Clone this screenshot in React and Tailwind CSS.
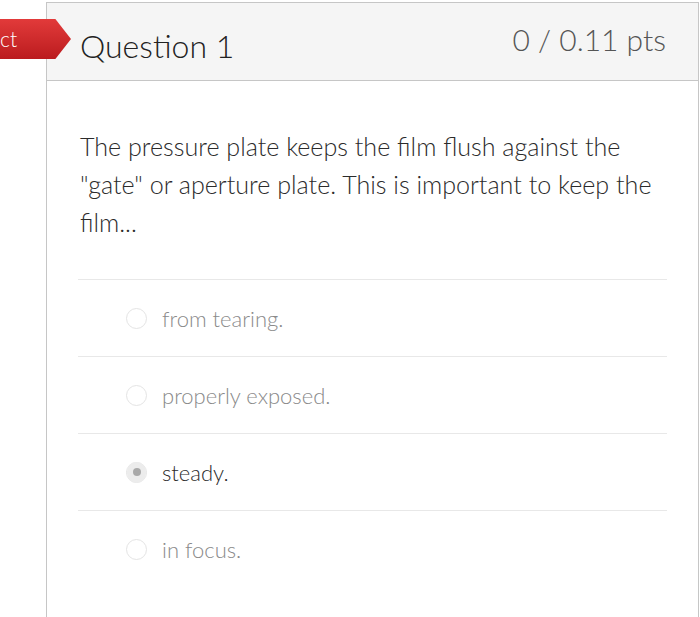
const options = [
  { label: "from tearing.", selected: false },
  { label: "properly exposed.", selected: false },
  { label: "steady.", selected: true },
  { label: "in focus.", selected: false },
];

function Radio({ selected }) {
  return (
    <span className="flex h-[21px] w-[21px] shrink-0 items-center justify-center rounded-full border border-[#e4e4e4] bg-white">
      {selected && (
        <span className="flex h-[21px] w-[21px] items-center justify-center rounded-full bg-[#ececec]">
          <span className="h-[8px] w-[8px] rounded-full bg-[#a9a9a9]" />
        </span>
      )}
    </span>
  );
}

export default function App() {
  return (
    <div className="relative h-[617px] w-[700px] overflow-hidden bg-white font-['Lato','Liberation_Sans',sans-serif] text-[#2d3b45]">
      <div className="absolute left-0 top-[19px] z-10 flex h-[40px] w-[71px] items-center bg-gradient-to-b from-[#e23a3a] to-[#bb1a1e] text-[21px] font-light text-white [clip-path:polygon(0_0,78%_0,100%_50%,78%_100%,0_100%)]">
        ct
      </div>

      <div className="ml-[46px] mt-[2px] h-[700px] w-[653px] border border-[#c6c6c6]">
        <div className="flex h-[78px] items-start justify-between border-b border-[#c6c6c6] bg-[#f5f5f5] pl-[33px] pr-[32px]">
          <h2 className="pt-[24px] text-[32px] font-light leading-[38px] text-[#222]">Question 1</h2>
          <span className="pt-[17px] text-[30px] font-light leading-[38px] text-[#555]">0 / 0.11 pts</span>
        </div>

        <div className="px-[31px] pt-[46px]">
          <p className="pl-[2px] text-[25.1px] font-light leading-[38px] text-[#2b2b2b]">
            The pressure plate keeps the film flush against the "gate" or aperture plate. This is important to keep the film...
          </p>

          <div className="mt-[38px]">
            {options.map((opt) => (
              <div key={opt.label} className="flex h-[77px] items-center gap-[15px] border-t border-[#e8e8e8] pl-[48px]">
                <Radio selected={opt.selected} />
                <span className={`text-[22px] font-light ${opt.selected ? "text-[#2b2b2b]" : "text-[#8a8a8a]"}`}>{opt.label}</span>
              </div>
            ))}
          </div>
        </div>
      </div>
    </div>
  );
}
